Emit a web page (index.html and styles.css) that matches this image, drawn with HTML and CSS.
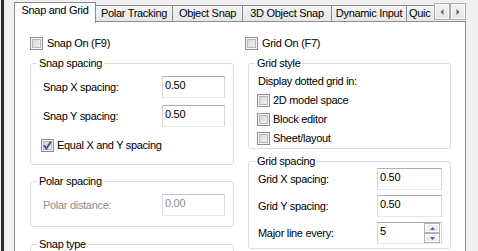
FILE: index.html
```html
<!DOCTYPE html>
<html lang="en">
<head>
    <meta charset="UTF-8">
    <meta name="viewport" content="width=device-width, initial-scale=1.0">
    <title>Drafting Settings</title>
    <link rel="stylesheet" href="styles.css">
</head>
<body>
    <div class="window">
        <div class="edge"></div>
        <div class="dialog">
            <div class="tab-bar">
                <div class="tab active tab-snap">Snap and Grid</div>
                <div class="tab tab-polar">Polar Tracking</div>
                <div class="tab tab-osnap">Object Snap</div>
                <div class="tab tab-3d">3D Object Snap</div>
                <div class="tab tab-dyn">Dynamic Input</div>
                <div class="tab tab-quick">Quic</div>
                <div class="tab-scroll">
                    <button class="scroll-btn">
                        <svg width="4" height="6" viewBox="0 0 4 6"><polygon points="3.5,0 0.5,3 3.5,6" fill="#4f6496"/></svg>
                    </button>
                    <button class="scroll-btn">
                        <svg width="4" height="6" viewBox="0 0 4 6"><polygon points="0.5,0 3.5,3 0.5,6" fill="#4f6496"/></svg>
                    </button>
                </div>
            </div>

            <div class="panel">
                <div class="col">
                    <label class="check">
                        <span class="box"></span>
                        Snap On (F9)
                    </label>

                    <fieldset class="group group-first">
                        <legend>Snap spacing</legend>
                        <div class="group-body snap-body">
                            <div class="field">
                                <span>Snap X spacing:</span>
                                <input class="edit" type="text" value="0.50">
                            </div>
                            <div class="field">
                                <span>Snap Y spacing:</span>
                                <input class="edit" type="text" value="0.50">
                            </div>
                            <label class="check check-equal">
                                <span class="box">
                                    <svg width="9" height="9" viewBox="0 0 9 9"><polyline points="1,4.2 3.4,7.6 8,0.6" fill="none" stroke="#40558f" stroke-width="1.9"/></svg>
                                </span>
                                Equal X and Y spacing
                            </label>
                        </div>
                    </fieldset>

                    <fieldset class="group group-polar">
                        <legend>Polar spacing</legend>
                        <div class="group-body polar-body">
                            <div class="field disabled">
                                <span>Polar distance:</span>
                                <input class="edit" type="text" value="0.00" disabled>
                            </div>
                        </div>
                    </fieldset>

                    <fieldset class="group group-type">
                        <legend>Snap type</legend>
                        <div class="group-body type-body"></div>
                    </fieldset>
                </div>

                <div class="col">
                    <label class="check">
                        <span class="box"></span>
                        Grid On (F7)
                    </label>

                    <fieldset class="group group-first group-right">
                        <legend>Grid style</legend>
                        <div class="group-body style-body">
                            <div class="caption">Display dotted grid in:</div>
                            <label class="check check-sub">
                                <span class="box"></span>
                                2D model space
                            </label>
                            <label class="check check-sub">
                                <span class="box"></span>
                                Block editor
                            </label>
                            <label class="check check-sub">
                                <span class="box"></span>
                                Sheet/layout
                            </label>
                        </div>
                    </fieldset>

                    <fieldset class="group group-spacing group-right">
                        <legend>Grid spacing</legend>
                        <div class="group-body spacing-body">
                            <div class="field">
                                <span>Grid X spacing:</span>
                                <input class="edit edit-wide" type="text" value="0.50">
                            </div>
                            <div class="field">
                                <span>Grid Y spacing:</span>
                                <input class="edit edit-wide" type="text" value="0.50">
                            </div>
                            <div class="field">
                                <span>Major line every:</span>
                                <div class="spin">
                                    <input class="spin-input" type="text" value="5">
                                    <div class="spin-btns">
                                        <button class="spin-btn">
                                            <svg width="5" height="3" viewBox="0 0 5 3"><polygon points="0,3 2.5,0 5,3" fill="#4f6496"/></svg>
                                        </button>
                                        <button class="spin-btn">
                                            <svg width="5" height="3" viewBox="0 0 5 3"><polygon points="0,0 2.5,3 5,0" fill="#4f6496"/></svg>
                                        </button>
                                    </div>
                                </div>
                            </div>
                        </div>
                    </fieldset>
                </div>
            </div>
        </div>
    </div>
</body>
</html>
```

FILE: styles.css
```css
* {
    box-sizing: border-box;
}

body {
    margin: 0;
    background-color: #f0f0f0;
    font-family: "Liberation Sans", Arial, sans-serif;
    font-size: 11px;
    line-height: 13px;
    letter-spacing: -0.3px;
    color: #000;
    overflow: hidden;
}

.window {
    display: flex;
    height: 251px;
}

.edge {
    width: 3px;
    margin-left: 1px;
    background-color: #2b2c30;
}

.dialog {
    width: 452px;
    margin-left: 10px;
}

/* tabs */

.tab-bar {
    display: flex;
    align-items: flex-start;
    height: 21px;
}

.tab {
    height: 16px;
    margin-top: 5px;
    margin-left: -1px;
    padding-top: 1px;
    border: 1px solid #898c95;
    border-bottom: none;
    background: linear-gradient(#f5f5f5, #e6e6e6);
    text-align: center;
    white-space: nowrap;
}

.tab.active {
    position: relative;
    z-index: 1;
    height: 21px;
    margin-top: 2px;
    margin-left: 0;
    background: #fff;
}

.tab-snap { width: 82px; }
.tab-polar { width: 78px; }
.tab-osnap { width: 71px; }
.tab-3d { width: 90px; }
.tab-dyn { width: 76px; }

.tab-quick {
    width: 28px;
    padding-left: 2px;
    border-right: none;
    overflow: hidden;
    text-align: left;
}

.tab-scroll {
    display: flex;
    margin-top: 3px;
}

.scroll-btn {
    display: flex;
    align-items: center;
    justify-content: center;
    width: 16px;
    height: 17px;
    padding: 0;
    border: 1px solid #a9abb0;
    background: linear-gradient(#f3f3f3, #e4e4e4);
    box-shadow: inset 0 0 0 1px #fbfbfb;
}

/* panel */

.panel {
    display: grid;
    grid-template-columns: 204px 206px;
    column-gap: 11px;
    align-items: start;
    height: 240px;
    padding: 15px 0 0 15px;
    border: 1px solid #898c95;
    background-color: #fff;
}

.check {
    display: flex;
    align-items: center;
    gap: 4px;
    height: 13px;
    white-space: nowrap;
}

.box {
    flex: none;
    width: 13px;
    height: 13px;
    padding: 1px;
    border: 1px solid #8e8f8f;
    background: linear-gradient(135deg, #cdd1d6, #f7f7f7);
    box-shadow: inset 0 0 0 1px #f4f4f4, inset 0 0 0 2px #b6bac0;
}

.box svg {
    display: block;
    overflow: visible;
}

.group {
    margin: 7px 0 0;
    padding: 0;
    min-width: 0;
    border: 1px solid #d5dfe5;
    border-radius: 3px;
}

.group legend {
    margin-left: 6px;
    padding: 0 2px;
    line-height: 13px;
}

.group-right {
    margin-left: 3px;
}

.field {
    display: flex;
    align-items: center;
    justify-content: space-between;
}

.edit {
    width: 63px;
    height: 22px;
    margin: 0;
    padding: 1px 2px 6px;
    border: 1px solid;
    border-color: #abadb3 #d3d6db #e3e9ef #d3d6db;
    background-color: #fff;
    font: inherit;
    letter-spacing: inherit;
    color: #000;
}

.edit-wide {
    width: 65px;
}

.disabled {
    color: #8d8d8d;
}

.disabled .edit {
    border-color: #c4c7cc #dadde1 #e6e9ec #dadde1;
    color: #8d8d8d;
}

/* left column */

.snap-body {
    padding: 6px 8px 12px 12px;
}

.snap-body .field + .field {
    margin-top: 7px;
}

.check-equal {
    margin: 12px 0 0 -2px;
    gap: 3px;
}

.group-polar {
    margin-top: 10px;
}

.polar-body {
    padding: 6px 8px 10px 12px;
}

.group-type {
    margin-top: 11px;
}

.type-body {
    height: 40px;
}

/* right column */

.style-body {
    padding: 5px 8px 3px 9px;
}

.check-sub {
    margin: 6px 0 0 -1px;
    gap: 3px;
}

.group-spacing {
    margin-top: 6px;
}

.spacing-body {
    padding: 0 8px 4px 9px;
}

.spacing-body .field + .field {
    margin-top: 5px;
}

.spin {
    display: flex;
    width: 65px;
    height: 22px;
    padding-right: 1px;
    border: 1px solid;
    border-color: #abadb3 #d3d6db #e3e9ef #d3d6db;
}

.spin-input {
    flex: 1;
    min-width: 0;
    height: 20px;
    margin: 0;
    padding: 0 2px 5px;
    border: none;
    font: inherit;
    letter-spacing: inherit;
    color: #000;
    background: transparent;
}

.spin-btns {
    display: flex;
    flex-direction: column;
    width: 16px;
}

.spin-btn {
    display: flex;
    align-items: center;
    justify-content: center;
    height: 10px;
    padding: 0;
    border: 1px solid #b0b3b8;
    background: linear-gradient(#f4f4f4, #e5e5e5);
    box-shadow: inset 0 0 0 1px #fcfcfc;
}

.spin-btn svg {
    display: block;
}
```
